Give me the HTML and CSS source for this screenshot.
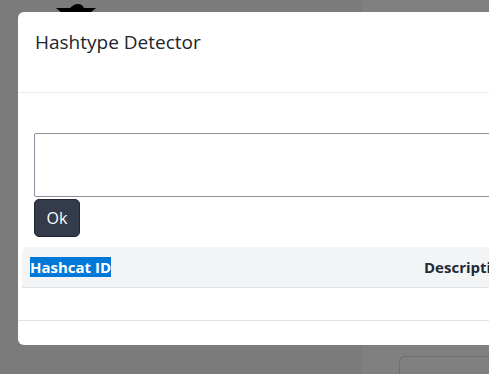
FILE: index.html
```html
<!DOCTYPE html>
<html>
<head>
<meta charset="utf-8">
<link rel="stylesheet" href="styles.css">
</head>
<body>
<div class="backdrop">
  <div class="side-panel">
    <div class="side-box"></div>
  </div>
  <svg class="top-mark" width="40" height="10" viewBox="0 0 40 10"><path d="M0 5 L14 5 Q18 1 22 1 Q26 1 28 5 L40 5 L34 10 L6 10 Z" fill="#000"/></svg>
</div>
<div class="modal">
  <div class="modal-header">
    <h5 class="modal-title">Hashtype Detector</h5>
  </div>
  <div class="modal-body">
    <textarea class="hash-input"></textarea>
    <button class="btn-ok">Ok</button>
    <table class="result-table">
      <thead>
        <tr><th class="col-id"><span class="sel">Hashcat ID</span></th><th class="col-desc">Description</th></tr>
      </thead>
      <tbody>
        <tr><td></td><td></td></tr>
      </tbody>
    </table>
  </div>
  <div class="modal-footer"></div>
</div>
</body>
</html>
```
FILE: styles.css
```css
html, body {
  margin: 0;
  padding: 0;
  width: 489px;
  height: 374px;
  overflow: hidden;
  background: #7b7b7b;
  font-family: "Open Sans", "Noto Sans", sans-serif;
}
.backdrop {
  position: absolute;
  inset: 0;
  display: flex;
  justify-content: flex-end;
  overflow: hidden;
}
.side-panel {
  width: 127px;
  height: 100%;
  background: #808080;
  box-sizing: border-box;
  padding: 356px 0 0 37px;
}
.side-box {
  height: 40px;
  border: 1px solid #6e6e6e;
  border-right: none;
  border-radius: 6px 0 0 0;
}
.top-mark {
  position: absolute;
  left: 56px;
  top: 3px;
}
.modal {
  position: absolute;
  left: 18px;
  top: 12px;
  width: 471px;
  height: 333px;
  background: #fff;
  border-radius: 6px 0 0 6px;
  display: flex;
  flex-direction: column;
  overflow: hidden;
}
.modal-header {
  height: 81px;
  flex: none;
  box-sizing: border-box;
  border-bottom: 1px solid #e9ecef;
  padding: 16px 0 0 17px;
}
.modal-title {
  margin: 0;
  font-size: 19px;
  font-weight: 400;
  color: #212529;
  line-height: 28px;
}
.modal-body {
  padding: 40px 0 0 4px;
  height: 228px;
  flex: none;
  box-sizing: border-box;
  border-bottom: 1px solid #dee2e6;
  overflow: hidden;
}
.hash-input {
  display: block;
  margin-left: 12px;
  width: 600px;
  height: 64px;
  box-sizing: border-box;
  border: 1px solid #8f8f9d;
  border-radius: 2px;
  resize: none;
  padding: 0;
}
.btn-ok {
  display: block;
  margin: 2px 0 0 12px;
  width: 46px;
  height: 38px;
  background: #343b4b;
  border: 1px solid #1f2633;
  border-radius: 5px;
  color: #fff;
  font-family: "Open Sans", "Noto Sans", sans-serif;
  font-size: 16px;
  padding: 0;
}
.result-table {
  margin-top: 10px;
  width: 600px;
  border-collapse: separate;
  border-spacing: 0;
}
.result-table th {
  background: #f3f4f6;
  height: 40px;
  text-align: left;
  font-size: 15px;
  font-weight: 700;
  color: #1f2937;
  border-bottom: 1px solid #dee2e6;
  padding: 0 8px;
  white-space: nowrap;
}
.result-table th.col-id {
  border-top-left-radius: 6px;
  width: 378px;
}
.sel {
  background: #0078d7;
  color: #fff;
  line-height: 20px;
  display: inline-block;
}
.result-table td {
  height: 32px;
  padding: 0;
}
.modal-footer {
  flex: 1;
}
```
